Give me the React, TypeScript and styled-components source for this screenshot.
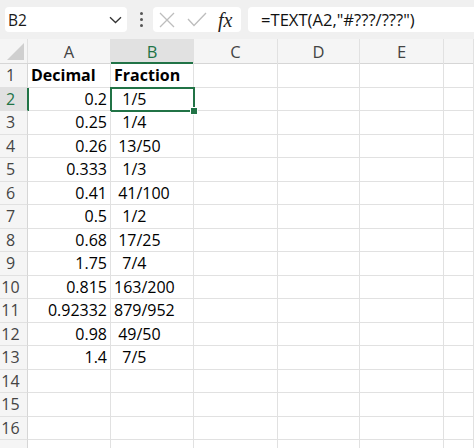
import React from "react";
import styled, { createGlobalStyle } from "styled-components";

const GREEN = "#217346";
const GRID = "#e1e1e1";
const HEAD_BG = "#f5f5f5";
const HEAD_SEL = "#e1e1e1";

const GlobalStyle = createGlobalStyle`
  html, body {
    margin: 0;
    padding: 0;
    background: #ffffff;
    overflow: hidden;
  }
  body {
    font-family: "Open Sans", "Noto Sans", sans-serif;
    color: #000;
  }
`;

const Sheet = styled.div`
  width: 474px;
  height: 448px;
  overflow: hidden;
  background: #fff;
`;

const Toolbar = styled.div`
  display: flex;
  align-items: center;
  height: 39px;
  padding: 0 0 0 5px;
  background: #f0f0f0;
  box-sizing: border-box;
`;

const NameBox = styled.div`
  display: flex;
  align-items: center;
  justify-content: space-between;
  width: 122px;
  height: 25px;
  padding: 0 5px 0 3px;
  box-sizing: border-box;
  background: #fff;
  border-radius: 4px;
  font-size: 15.5px;
  color: #1a1a1a;
`;

const Dots = styled.div`
  display: flex;
  flex-direction: column;
  gap: 3px;
  margin: 0 10px 0 13px;
  & > span {
    width: 3px;
    height: 3px;
    border-radius: 50%;
    background: #555;
  }
`;

const IconBox = styled.div`
  display: flex;
  align-items: center;
  width: 88px;
  height: 25px;
  padding-left: 6px;
  gap: 12px;
  box-sizing: border-box;
  background: #fff;
  border-radius: 4px;
`;

const Fx = styled.span`
  font-family: "Liberation Serif", "DejaVu Serif", serif;
  font-style: italic;
  font-size: 20px;
  color: #222;
  margin-left: -1px;
  line-height: 1;
`;

const FormulaBox = styled.div`
  flex: 1;
  display: flex;
  align-items: center;
  height: 25px;
  margin-left: 7px;
  padding-left: 13px;
  background: #fff;
  border-radius: 4px 0 0 4px;
  font-size: 16.6px;
  color: #111;
  white-space: pre;
`;

const COLS = "28px 83px 83px 84px 82px 84px 1fr";

const HeaderRow = styled.div`
  display: grid;
  grid-template-columns: ${COLS};
  height: 25px;
  background: ${HEAD_BG};
  border-bottom: 1px solid #d6d6d6;
  box-sizing: border-box;
`;

const Corner = styled.div`
  position: relative;
  border-right: 1px solid ${GRID};
  &::after {
    content: "";
    position: absolute;
    right: 3px;
    bottom: 3px;
    width: 0;
    height: 0;
    border-left: 17px solid transparent;
    border-bottom: 17px solid #cfcfcf;
  }
`;

const ColHead = styled.div<{ $sel?: boolean }>`
  display: flex;
  align-items: center;
  justify-content: center;
  font-size: 16.5px;
  color: ${(p) => (p.$sel ? GREEN : "#444")};
  background: ${(p) => (p.$sel ? HEAD_SEL : "transparent")};
  border-right: 1px solid ${GRID};
  box-shadow: ${(p) => (p.$sel ? `inset 0 -2px 0 ${GREEN}` : "none")};
  margin-bottom: -1px;
`;

const Row = styled.div`
  display: grid;
  grid-template-columns: ${COLS};
  height: 23.5px;
`;

const RowHead = styled.div<{ $sel?: boolean }>`
  display: flex;
  align-items: center;
  justify-content: center;
  padding-right: 6px;
  font-size: 16px;
  color: ${(p) => (p.$sel ? GREEN : "#444")};
  background: ${(p) => (p.$sel ? HEAD_SEL : HEAD_BG)};
  border-right: 1px solid ${(p) => (p.$sel ? GREEN : "#d6d6d6")};
  box-shadow: ${(p) => (p.$sel ? `1px 0 0 ${GREEN}` : "none")};
  border-bottom: 1px solid ${GRID};
  position: relative;
  z-index: 1;
`;

const Cell = styled.div<{ $align?: "left" | "right"; $bold?: boolean; $sel?: boolean }>`
  position: relative;
  font-size: 16px;
  line-height: 22.5px;
  font-weight: ${(p) => (p.$bold ? 700 : 400)};
  text-align: ${(p) => p.$align ?? "left"};
  padding: 0 3px;
  white-space: pre;
  overflow: visible;
  border-right: 1px solid ${GRID};
  border-bottom: 1px solid ${GRID};
  &::after {
    content: ${(p) => (p.$sel ? '""' : "none")};
    position: absolute;
    inset: -1px -2px -2px -1px;
    border: 2px solid ${GREEN};
    pointer-events: none;
  }
  &::before {
    content: ${(p) => (p.$sel ? '""' : "none")};
    position: absolute;
    right: -5px;
    bottom: -5px;
    width: 6px;
    height: 6px;
    background: ${GREEN};
    border: 1px solid #fff;
    z-index: 2;
  }
`;

const Chevron = () => (
  <svg width="13" height="8" viewBox="0 0 13 8">
    <path d="M1 1.2 L6.5 6.5 L12 1.2" fill="none" stroke="#333" strokeWidth="1.3" />
  </svg>
);

const Cancel = () => (
  <svg width="16" height="16" viewBox="0 0 16 16">
    <path d="M1 1 L15 15 M15 1 L1 15" stroke="#bdbdbd" strokeWidth="1.3" />
  </svg>
);

const Enter = () => (
  <svg width="20" height="15" viewBox="0 0 20 15">
    <path d="M1 7 L7 13.5 L19 1" fill="none" stroke="#bdbdbd" strokeWidth="1.3" />
  </svg>
);

const data: [string, string][] = [
  ["0.2", "  1/5"],
  ["0.25", "  1/4"],
  ["0.26", " 13/50"],
  ["0.333", "  1/3"],
  ["0.41", " 41/100"],
  ["0.5", "  1/2"],
  ["0.68", " 17/25"],
  ["1.75", "  7/4"],
  ["0.815", "163/200"],
  ["0.92332", "879/952"],
  ["0.98", " 49/50"],
  ["1.4", "  7/5"],
];

const letters = ["A", "B", "C", "D", "E", ""];

export default function App() {
  const rows: [string, string, boolean][] = [
    ["Decimal", "Fraction", true],
    ...data.map(([a, b]) => [a, b, false] as [string, string, boolean]),
    ["", "", false],
    ["", "", false],
    ["", "", false],
  ];

  return (
    <>
      <GlobalStyle />
      <Sheet>
        <Toolbar>
          <NameBox>
            <span>B2</span>
            <Chevron />
          </NameBox>
          <Dots>
            <span />
            <span />
            <span />
          </Dots>
          <IconBox>
            <Cancel />
            <Enter />
            <Fx>fx</Fx>
          </IconBox>
          <FormulaBox>=TEXT(A2,"#???/???")</FormulaBox>
        </Toolbar>
        <HeaderRow>
          <Corner />
          {letters.map((l, i) => (
            <ColHead key={i} $sel={l === "B"}>
              {l}
            </ColHead>
          ))}
        </HeaderRow>
        {rows.map(([a, b, bold], i) => (
          <Row key={i}>
            <RowHead $sel={i === 1}>{i + 1}</RowHead>
            <Cell $align={bold ? "left" : "right"} $bold={bold}>
              {a}
            </Cell>
            <Cell $bold={bold} $sel={i === 1}>
              {b}
            </Cell>
            <Cell />
            <Cell />
            <Cell />
            <Cell />
          </Row>
        ))}
        {/* the next row peeks in below the fold */}
        <Row>
          <RowHead />
          <Cell />
          <Cell />
          <Cell />
          <Cell />
          <Cell />
          <Cell />
        </Row>
      </Sheet>
    </>
  );
}
